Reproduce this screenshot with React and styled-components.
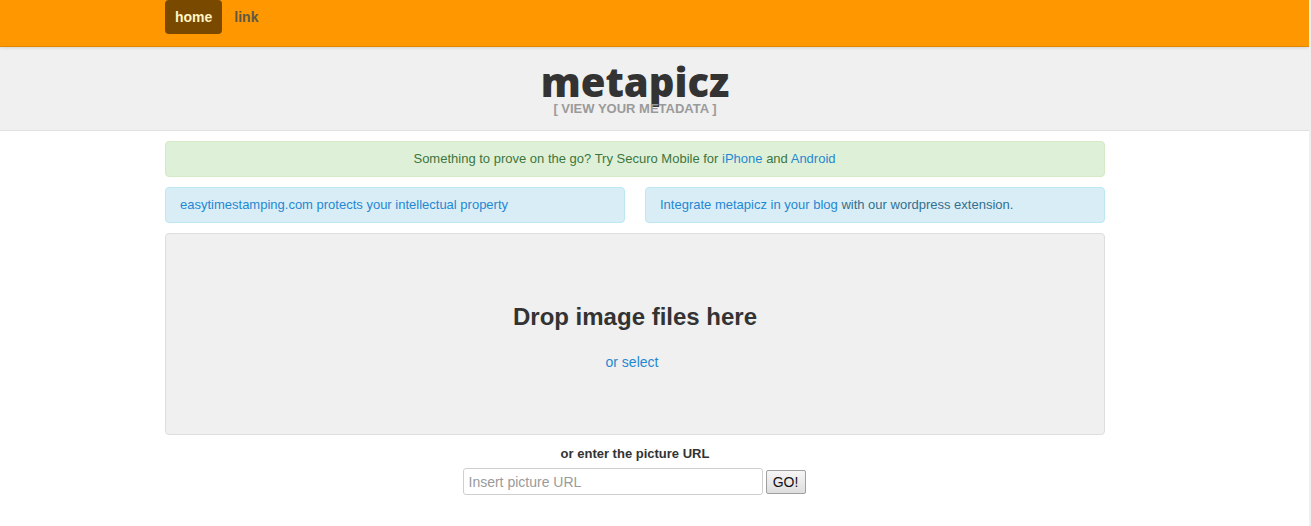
import React from "react";
import styled, { createGlobalStyle } from "styled-components";

const Global = createGlobalStyle`
  html { background: #f0f0f0; }
  body {
    margin: 0 2px 0 0;
    min-height: 100vh;
    background: #fff;
    font-family: "Liberation Sans", Arial, sans-serif;
    font-size: 14px;
    color: #333;
  }
  * { box-sizing: border-box; }
`;

const NavBar = styled.div`
  height: 47px;
  background: #fe9700;
  border-bottom: 1px solid #e38600;
  box-shadow: 0 1px 3px rgba(0,0,0,0.12);
  position: relative;
  z-index: 1;
`;

const Wrap = styled.div`
  padding-right: 39px;
`;

const Container = styled.div`
  width: 940px;
  margin: 0 auto;
`;

const NavList = styled.div`
  display: flex;
  align-items: flex-start;
  gap: 2px;
`;

const NavItem = styled.a`
  display: block;
  height: 34px;
  line-height: 34px;
  padding: 0 10px;
  font-weight: bold;
  font-size: 14px;
  text-decoration: none;
  border-radius: 4px;
  color: ${p => (p.$active ? "#fff5c4" : "#5c5a45")};
  background: ${p => (p.$active ? "#7a4900" : "transparent")};
`;

const Header = styled.div`
  background: #f0f0f0;
  border-bottom: 1px solid #e0e0e0;
  height: 84px;
  text-align: center;
  padding-top: 12px;
`;

const Title = styled.h1`
  margin: 0;
  font-family: "Open Sans", sans-serif;
  font-weight: 800;
  font-size: 40px;
  line-height: 46px;
  color: #333;
`;

const Sub = styled.div`
  margin-top: -4px;
  font-weight: bold;
  font-size: 13px;
  color: #9a9a9a;
`;

const Main = styled.div`
  padding-top: 10px;
  display: flex;
  flex-direction: column;
  gap: 10px;
`;

const Alert = styled.div`
  height: 36px;
  line-height: 34px;
  padding: ${p => (p.$center ? "0 35px 0 14px" : "0 14px")};
  border-radius: 4px;
  font-size: 13px;
  border: 1px solid ${p => (p.$tone === "green" ? "#d6e9c6" : "#bce8f1")};
  background: ${p => (p.$tone === "green" ? "#dff0d8" : "#d9edf7")};
  color: ${p => (p.$tone === "green" ? "#3c763d" : "#31708f")};
  text-align: ${p => (p.$center ? "center" : "left")};
`;

const A = styled.a`
  color: #1f88d2;
  text-decoration: none;
`;

const Row = styled.div`
  display: grid;
  grid-template-columns: 1fr 1fr;
  gap: 20px;
`;

const Drop = styled.div`
  height: 202px;
  background: #f0f0f0;
  border: 1px solid #dedede;
  border-radius: 4px;
  display: flex;
  flex-direction: column;
  align-items: center;
  padding-top: 69px;
`;

const DropTitle = styled.div`
  font-size: 24px;
  font-weight: bold;
  color: #333;
  line-height: 28px;
`;

const Select = styled(A)`
  margin-top: 23px;
  margin-right: 6px;
  font-size: 14px;
`;

const UrlBlock = styled.div`
  display: flex;
  flex-direction: column;
  align-items: center;
`;

const UrlLabel = styled.div`
  font-weight: bold;
  font-size: 13px;
  line-height: 18px;
  color: #333;
`;

const Form = styled.div`
  display: flex;
  align-items: center;
  gap: 3px;
  margin-top: 5px;
  padding-right: 2px;
`;

const Input = styled.input`
  width: 300px;
  height: 27px;
  border: 1px solid #cfcfcf;
  border-radius: 3px;
  padding: 0 5px;
  font-family: "Liberation Sans", Arial, sans-serif;
  font-size: 14px;
  &::placeholder { color: #9a9a9a; }
`;

const Go = styled.button`
  width: 40px;
  height: 24px;
  border: 1px solid #a0a0a0;
  border-radius: 2px;
  background: linear-gradient(#f6f6f6, #dedede);
  font-family: "Liberation Sans", Arial, sans-serif;
  font-size: 14px;
  color: #111;
  padding: 0;
`;

export default function App() {
  return (
    <>
      <Global />
      <NavBar>
        <Wrap>
          <Container>
            <NavList>
              <NavItem $active href="#">home</NavItem>
              <NavItem href="#">link</NavItem>
            </NavList>
          </Container>
        </Wrap>
      </NavBar>
      <Header>
        <Wrap>
          <Title>metapicz</Title>
          <Sub>[ VIEW YOUR METADATA ]</Sub>
        </Wrap>
      </Header>
      <Wrap>
        <Container>
          <Main>
            <Alert $tone="green" $center>
              Something to prove on the go? Try Securo Mobile for <A href="#">iPhone</A> and <A href="#">Android</A>
            </Alert>
            <Row>
              <Alert>
                <A href="#">easytimestamping.com protects your intellectual property</A>
              </Alert>
              <Alert>
                <A href="#">Integrate metapicz in your blog</A> with our wordpress extension.
              </Alert>
            </Row>
            <Drop>
              <DropTitle>Drop image files here</DropTitle>
              <Select href="#">or select</Select>
            </Drop>
            <UrlBlock>
              <UrlLabel>or enter the picture URL</UrlLabel>
              <Form>
                <Input placeholder="Insert picture URL" />
                <Go>GO!</Go>
              </Form>
            </UrlBlock>
          </Main>
        </Container>
      </Wrap>
    </>
  );
}
